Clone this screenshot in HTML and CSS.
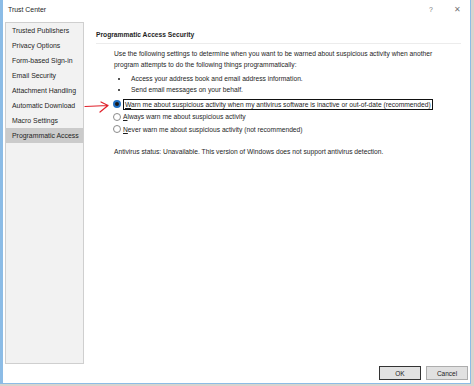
FILE: index.html
```html
<!DOCTYPE html>
<html lang="en">
<head>
    <meta charset="UTF-8">
    <title>Trust Center</title>
    <link rel="stylesheet" href="styles.css">
</head>
<body>
    <div class="window">
        <div class="titlebar">
            <span class="title">Trust Center</span>
            <span class="ctl">?</span>
            <span class="ctl close">&#x2715;</span>
        </div>

        <div class="content">
            <ul class="sidebar">
                <li>Trusted Publishers</li>
                <li>Privacy Options</li>
                <li>Form-based Sign-in</li>
                <li>Email Security</li>
                <li>Attachment Handling</li>
                <li>Automatic Download</li>
                <li>Macro Settings</li>
                <li class="selected">Programmatic Access</li>
            </ul>

            <div class="main">
                <h2>Programmatic Access Security</h2>
                <div class="section">
                    <p>Use the following settings to determine when you want to be warned about suspicious activity when another<br>program attempts to do the following things programmatically:</p>
                    <ul class="bullets">
                        <li>Access your address book and email address information.</li>
                        <li>Send email messages on your behalf.</li>
                    </ul>
                    <div class="options">
                        <label class="option">
                            <span class="radio checked"></span>
                            <span class="focus"><u>W</u>arn me about suspicious activity when my antivirus software is inactive or out-of-date (recommended)</span>
                        </label>
                        <label class="option">
                            <span class="radio"></span>
                            <span><u>A</u>lways warn me about suspicious activity</span>
                        </label>
                        <label class="option">
                            <span class="radio"></span>
                            <span><u>N</u>ever warn me about suspicious activity (not recommended)</span>
                        </label>
                    </div>
                    <p class="status">Antivirus status: Unavailable. This version of Windows does not support antivirus detection.</p>
                </div>

                <!-- red annotation arrow -->
                <svg class="arrow" width="26" height="14" viewBox="0 0 26 14">
                    <path d="M1 7.5 L24 6.5 M24 6.5 L17 3 M24 6.5 L16 13" fill="none" stroke="#e0202a" stroke-width="1.2" stroke-linecap="round"/>
                </svg>
            </div>
        </div>

        <div class="footer">
            <button class="default">OK</button>
            <button>Cancel</button>
        </div>
    </div>
</body>
</html>
```

FILE: styles.css
```css
/* Page behind the dialog */
body {
    margin: 0;
    background-color: #d9d4ce;
    font-family: "Liberation Sans", Arial, sans-serif;
    color: #1e1e1e;
}

/* Dialog window */
.window {
    width: 467px;
    height: 383px;
    background: #fff;
    border-left: 3px solid #8cbce6;
    border-right: 1px solid #8cbce6;
    border-bottom: 1px solid #8cbce6;
    display: flex;
    flex-direction: column;
}

/* Title bar */
.titlebar {
    height: 19px;
    display: flex;
    align-items: center;
    padding-left: 5px;
    font-size: 6.9px;
}

.title {
    flex: 1;
}

.ctl {
    color: #777;
    width: 26px;
    text-align: center;
}

.close {
    font-size: 8px;
}

/* Body: sidebar + main */
.content {
    flex: 1;
    display: flex;
    min-height: 0;
}

.sidebar {
    list-style: none;
    margin: 3px 0 0 2px;
    padding: 0;
    width: 77px;
    height: 340px;
    background: #f2f2f2;
    border: 1px solid #cfcfcf;
    font-size: 6.9px;
}

.sidebar li {
    height: 15px;
    line-height: 15px;
    padding-left: 6px;
    white-space: nowrap;
}

.sidebar li.selected {
    background: #cbcbcb;
}

.main {
    position: relative;
    flex: 1;
    padding: 0 9px 0 12px;
    font-size: 6.7px;
}

.main h2 {
    margin: 0;
    padding: 12px 0 5px;
    font-size: 6.7px;
    font-weight: bold;
    border-bottom: 1px solid #ececec;
}

.section {
    padding-left: 18px;
}

.section p {
    margin: 4px 0 0;
    line-height: 11px;
    white-space: nowrap;
}

.bullets {
    margin: 3px 0 0;
    padding-left: 15px;
    line-height: 11px;
}

.bullets li {
    padding-left: 2px;
}

.options {
    margin-top: 3px;
    margin-left: -1px;
}

.option {
    display: flex;
    align-items: center;
    gap: 2px;
    height: 12.5px;
    white-space: nowrap;
}

.radio {
    width: 6px;
    height: 6px;
    border: 1px solid #8a8a8a;
    border-radius: 50%;
    background: #fff;
    flex: none;
}

.radio.checked {
    width: 4px;
    height: 4px;
    border: 2px solid #1f6fc2;
    background: #1a1a1a;
}

.focus {
    border: 1px solid #111;
    padding: 0 1px;
    line-height: 9px;
}

.section p.status {
    margin-top: 10px;
}

.arrow {
    position: absolute;
    left: 0;
    top: 80px;
}

/* Bottom buttons */
.footer {
    flex: none;
    height: 17px;
    display: flex;
    justify-content: flex-end;
    align-items: flex-start;
    gap: 5px;
    padding: 3px 2px 0 0;
}

.footer button {
    width: 42px;
    height: 14px;
    padding: 0;
    font-family: inherit;
    font-size: 6.5px;
    color: #222;
    background: #e1e1e1;
    border: 1px solid #adadad;
}

.footer button.default {
    border: 1px solid #333;
}
```
